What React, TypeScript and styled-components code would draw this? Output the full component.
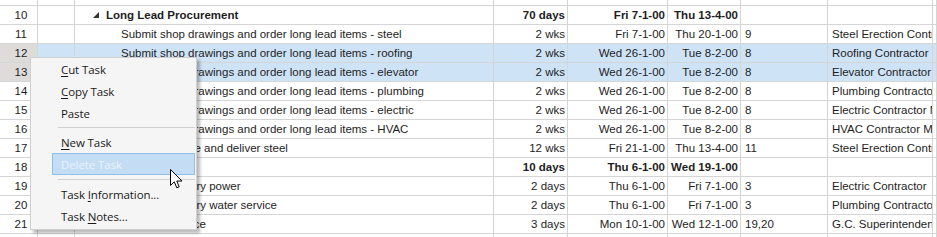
import React from "react";
import styled, { createGlobalStyle } from "styled-components";

const Global = createGlobalStyle`
  html, body { margin: 0; padding: 0; background: #fff; }
  body { width: 937px; height: 237px; overflow: hidden; }
`;

const Page = styled.div`
  position: relative;
  width: 937px;
  height: 237px;
  overflow: hidden;
  background: #fff;
  font-family: "Liberation Sans", Arial, sans-serif;
  font-size: 11.5px;
  color: #1e1e1e;
`;

const Row = styled.div<{ $h?: number; $sel?: boolean }>`
  display: flex;
  height: ${(p) => p.$h ?? 19}px;
  box-sizing: border-box;
  border-bottom: 1px solid #d5d5d5;
  background: ${(p) => (p.$sel ? "#cfe3f7" : "#fff")};
`;

const Cell = styled.div<{
  $w?: number;
  $align?: "left" | "right" | "center";
  $bold?: boolean;
  $pl?: number;
  $pr?: number;
  $bg?: string;
}>`
  ${(p) => (p.$w ? `width: ${p.$w}px; flex: none;` : "flex: 1;")}
  box-sizing: border-box;
  border-right: 1px solid #d5d5d5;
  display: flex;
  align-items: center;
  justify-content: ${(p) =>
    p.$align === "right" ? "flex-end" : p.$align === "center" ? "center" : "flex-start"};
  padding-left: ${(p) => p.$pl ?? 0}px;
  padding-right: ${(p) => p.$pr ?? 0}px;
  font-weight: ${(p) => (p.$bold ? "bold" : "normal")};
  white-space: nowrap;
  overflow: hidden;
  ${(p) => (p.$bg ? `background: ${p.$bg};` : "")}
`;

const Toggle = styled.svg`
  width: 6px;
  height: 6px;
  margin-right: 7px;
  flex: none;
`;

const Menu = styled.div`
  position: absolute;
  left: 30px;
  top: 57px;
  width: 167px;
  box-sizing: border-box;
  background: #f5f5f5;
  border: 1px solid #cfcfcf;
  padding: 0 0 2px;
  box-shadow: 3px 3px 3px rgba(0, 0, 0, 0.28);
  font-family: "Open Sans", "Noto Sans", sans-serif;
  font-size: 11.5px;
  color: #1a1a1a;
`;

const Item = styled.div<{ $hl?: boolean }>`
  height: 22px;
  box-sizing: border-box;
  margin: 0 1px 0 21px;
  padding-left: 8px;
  display: flex;
  align-items: center;
  border: 1px solid ${(p) => (p.$hl ? "#8fc0ea" : "transparent")};
  background: ${(p) => (p.$hl ? "#c4ddf5" : "transparent")};
  color: ${(p) => (p.$hl ? "#e9f2fb" : "#1a1a1a")};
`;

const Label = styled.span`
  white-space: pre;
  letter-spacing: -0.1px;
`;

const Sep = styled.div<{ $h: number }>`
  height: ${(p) => p.$h}px;
  display: flex;
  align-items: center;
  margin: 0 1px 0 27px;
  &::after {
    content: "";
    flex: 1;
    height: 1px;
    background: #d0d0d0;
  }
`;

const Cursor = styled.svg`
  position: absolute;
  left: 170px;
  top: 169px;
  width: 13px;
  height: 20px;
`;

const U = styled.span`
  text-decoration: underline;
  text-underline-offset: 2px;
`;

type R = {
  n: string;
  name: string;
  summary?: boolean;
  dur: string;
  start: string;
  finish: string;
  pred: string;
  res: string;
  sel?: boolean;
};

const prefix = "Submit shop drawings and order long lead items - ";

const rows: R[] = [
  { n: "10", name: "Long Lead Procurement", summary: true, dur: "70 days", start: "Fri 7-1-00", finish: "Thu 13-4-00", pred: "", res: "" },
  { n: "11", name: prefix + "steel", dur: "2 wks", start: "Fri 7-1-00", finish: "Thu 20-1-00", pred: "9", res: "Steel Erection Contractor" },
  { n: "12", name: prefix + "roofing", dur: "2 wks", start: "Wed 26-1-00", finish: "Tue 8-2-00", pred: "8", res: "Roofing Contractor Management", sel: true },
  { n: "13", name: prefix + "elevator", dur: "2 wks", start: "Wed 26-1-00", finish: "Tue 8-2-00", pred: "8", res: "Elevator Contractor Management", sel: true },
  { n: "14", name: prefix + "plumbing", dur: "2 wks", start: "Wed 26-1-00", finish: "Tue 8-2-00", pred: "8", res: "Plumbing Contractor Management" },
  { n: "15", name: prefix + "electric", dur: "2 wks", start: "Wed 26-1-00", finish: "Tue 8-2-00", pred: "8", res: "Electric Contractor Management" },
  { n: "16", name: prefix + "HVAC", dur: "2 wks", start: "Wed 26-1-00", finish: "Tue 8-2-00", pred: "8", res: "HVAC Contractor Management" },
  { n: "17", name: "Detail, fabricate and deliver steel", dur: "12 wks", start: "Fri 21-1-00", finish: "Thu 13-4-00", pred: "11", res: "Steel Erection Contractor" },
  { n: "18", name: "Mobilize on Site", summary: true, dur: "10 days", start: "Thu 6-1-00", finish: "Wed 19-1-00", pred: "", res: "" },
  { n: "19", name: "Install temporary power", dur: "2 days", start: "Thu 6-1-00", finish: "Fri 7-1-00", pred: "3", res: "Electric Contractor" },
  { n: "20", name: "Install temporary water service", dur: "2 days", start: "Thu 6-1-00", finish: "Fri 7-1-00", pred: "3", res: "Plumbing Contractor" },
  { n: "21", name: "Set up site office", dur: "3 days", start: "Mon 10-1-00", finish: "Wed 12-1-00", pred: "19,20", res: "G.C. Superintendent,G.C. Project Management" },
];

const Columns: React.FC<{ r?: R; h?: number }> = ({ r, h }) => (
  <Row $h={h} $sel={r?.sel}>
    <Cell $w={38} $align="center" $pl={5} $bg={r?.sel ? "#dedbdb" : undefined}>
      {r?.n}
    </Cell>
    <Cell $w={37} />
    <Cell $w={419} $pl={r ? (r.summary ? 18 : 46) : 0} $bold={r?.summary}>
      {r?.summary && (
        <Toggle viewBox="0 0 6 6">
          <polygon points="6,0 6,6 0,6" fill="#333" />
        </Toggle>
      )}
      {r?.name}
    </Cell>
    <Cell $w={74} $align="right" $pr={2} $bold={r?.summary}>
      {r?.dur}
    </Cell>
    <Cell $w={100} $align="right" $pr={2} $bold={r?.summary}>
      {r?.start}
    </Cell>
    <Cell $w={73} $align="right" $pr={2} $bold={r?.summary}>
      {r?.finish}
    </Cell>
    <Cell $w={87} $pl={4}>
      {r?.pred}
    </Cell>
    <Cell $w={105} $pl={4}>
      {r?.res}
    </Cell>
    <Cell />
  </Row>
);

export default function App() {
  return (
    <Page>
      <Global />
      <Columns h={6} />
      {rows.map((r) => (
        <Columns key={r.n} r={r} />
      ))}
      <Columns h={19} />
      <Menu>
        <Item>
          <Label>
            <U>C</U>ut Task
          </Label>
        </Item>
        <Item>
          <Label>
            <U>C</U>opy Task
          </Label>
        </Item>
        <Item>
          <Label>Paste</Label>
        </Item>
        <Sep $h={7} />
        <Item>
          <Label>
            <U>N</U>ew Task
          </Label>
        </Item>
        <Item $hl>
          <Label>Delete Task</Label>
        </Item>
        <Sep $h={8} />
        <Item>
          <Label>
            {"Task "}
            <U>I</U>nformation...
          </Label>
        </Item>
        <Item>
          <Label>
            {"Task "}
            <U>N</U>otes...
          </Label>
        </Item>
      </Menu>
      <Cursor viewBox="0 0 13 20">
        <path
          d="M0.5 0.5 L0.5 16.5 L4.3 12.8 L6.8 18.8 L9.2 17.8 L6.8 12 L12 12 Z"
          fill="#fff"
          stroke="#000"
          strokeWidth="1"
          strokeLinejoin="miter"
        />
      </Cursor>
    </Page>
  );
}
